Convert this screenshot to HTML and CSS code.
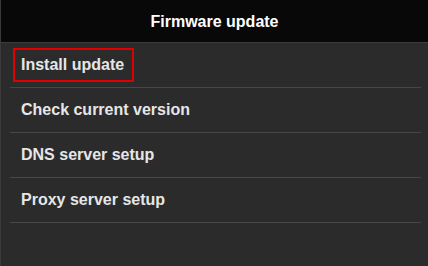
FILE: index.html
```html
<!DOCTYPE html>
<html>
<head>
<meta charset="utf-8">
<link rel="stylesheet" href="styles.css">
</head>
<body>
<div class="screen">
  <header class="title-bar">Firmware update</header>
  <ul class="menu">
    <li class="menu-item"><span class="label selected">Install update</span></li>
    <li class="menu-item"><span class="label">Check current version</span></li>
    <li class="menu-item"><span class="label">DNS server setup</span></li>
    <li class="menu-item"><span class="label">Proxy server setup</span></li>
  </ul>
</div>
</body>
</html>
```
FILE: styles.css
```css
html, body {
  margin: 0;
  padding: 0;
  background: #2b2b2b;
}
.screen {
  width: 428px;
  height: 266px;
  background: #2b2b2b;
  border-left: 1px solid #3a3a3a;
  box-sizing: border-box;
  font-family: "Liberation Sans", Arial, sans-serif;
  overflow: hidden;
}
.title-bar {
  height: 42px;
  line-height: 43px;
  background: #080808;
  color: #ffffff;
  font-weight: bold;
  font-size: 16px;
  text-align: center;
  border-bottom: 1px solid #3c3c3c;
}
.menu {
  list-style: none;
  margin: 0;
  padding: 0 7px 0 9px;
}
.menu-item {
  height: 44px;
  border-bottom: 1px solid #474747;
  display: flex;
  align-items: center;
  padding-left: 3px;
}
.label {
  display: inline-block;
  height: 30px;
  line-height: 30px;
  padding: 0 8px 0 6px;
  border: 2px solid transparent;
  color: #e6e6e6;
  font-weight: bold;
  font-size: 16px;
}
.label.selected {
  border-color: #e00000;
}
```
